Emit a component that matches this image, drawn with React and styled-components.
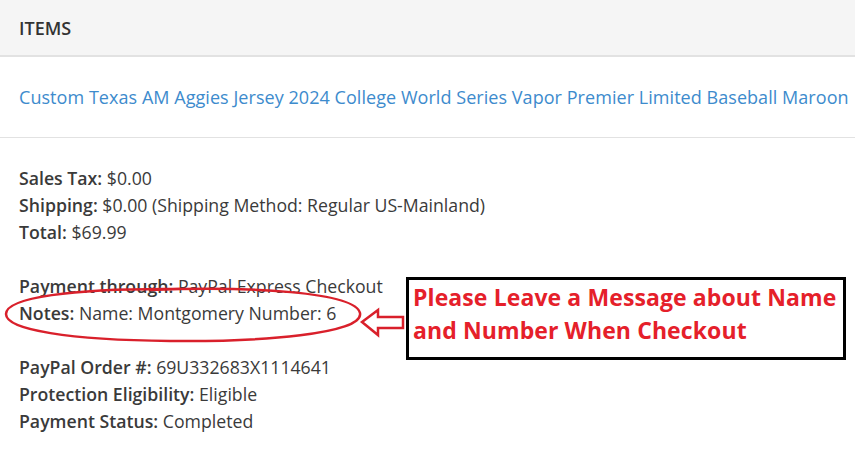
import React from "react";
import styled, { createGlobalStyle } from "styled-components";

const Global = createGlobalStyle`
  html, body { margin: 0; padding: 0; background: #fff; }
  body { width: 855px; height: 458px; overflow: hidden; }
`;

const Panel = styled.div`
  position: relative;
  width: 855px;
  height: 458px;
  font-family: "Open Sans", sans-serif;
  color: #3a3a3a;
`;

const Header = styled.div`
  height: 55px;
  display: flex;
  align-items: center;
  padding-left: 19px;
  background: #f5f5f5;
  border-bottom: 2px solid #e2e2e2;
  font-size: 18px;
  font-weight: 600;
  color: #333;
`;

const ItemRow = styled.div`
  height: 80px;
  display: flex;
  align-items: center;
  padding-left: 19px;
  border-bottom: 1px solid #e2e2e2;
  white-space: nowrap;
`;

const ItemLink = styled.a`
  color: #3d8bcd;
  font-size: 18px;
  letter-spacing: 0.05px;
  text-decoration: none;
`;

const Details = styled.div`
  padding: 27px 19px 0;
  display: flex;
  flex-direction: column;
  gap: 27px;
`;

const Group = styled.div`
  display: flex;
  flex-direction: column;
`;

const Line = styled.div`
  font-size: 17.7px;
  line-height: 27px;
  white-space: nowrap;
`;

const Label = styled.span`
  font-weight: 600;
  color: #3a3a3a;
`;

const Ellipse = styled.svg`
  position: absolute;
  left: 0;
  top: 280px;
  overflow: visible;
`;

const Callout = styled.div`
  position: absolute;
  box-sizing: border-box;
  left: 406px;
  top: 277px;
  width: 440px;
  height: 83px;
  border: 3px solid #000;
  padding: 1px 0 0 4px;
  font-family: "Open Sans", sans-serif;
  font-weight: 700;
  font-size: 23px;
  line-height: 33px;
  letter-spacing: 0.1px;
  color: #e5202a;
  white-space: nowrap;
`;

const rows = [
  [
    ["Sales Tax:", "$0.00"],
    ["Shipping:", "$0.00 (Shipping Method: Regular US-Mainland)"],
    ["Total:", "$69.99"],
  ],
  [
    ["Payment through:", "PayPal Express Checkout"],
    ["Notes:", "Name: Montgomery Number: 6"],
  ],
  [
    ["PayPal Order #:", "69U332683X1114641"],
    ["Protection Eligibility:", "Eligible"],
    ["Payment Status:", "Completed"],
  ],
];

export default function App() {
  return (
    <Panel>
      <Global />
      <Header>ITEMS</Header>
      <ItemRow>
        <ItemLink href="#">
          Custom Texas AM Aggies Jersey 2024 College World Series Vapor Premier Limited Baseball Maroon
        </ItemLink>
      </ItemRow>
      <Details>
        {rows.map((g, i) => (
          <Group key={i}>
            {g.map(([l, v]) => (
              <Line key={l}>
                <Label>{l}</Label> {v}
              </Line>
            ))}
          </Group>
        ))}
      </Details>
      <Ellipse width="420" height="70" viewBox="0 280 420 70">
        <path
          d="M150 290 C 250 286, 355 292, 360 313 C 364 334, 260 342, 170 341 C 70 340, 6 330, 6 314 C 6 298, 70 288, 180 289"
          fill="none"
          stroke="#d9202b"
          strokeWidth="2.5"
        />
        <path
          d="M362 322 L378 310 L378 317 L403 317 L403 328 L378 328 L378 335 Z"
          fill="none"
          stroke="#d9202b"
          strokeWidth="2.5"
          strokeLinejoin="miter"
        />
      </Ellipse>
      <Callout>
        Please Leave a Message about Name
        <br />
        and Number When Checkout
      </Callout>
    </Panel>
  );
}
